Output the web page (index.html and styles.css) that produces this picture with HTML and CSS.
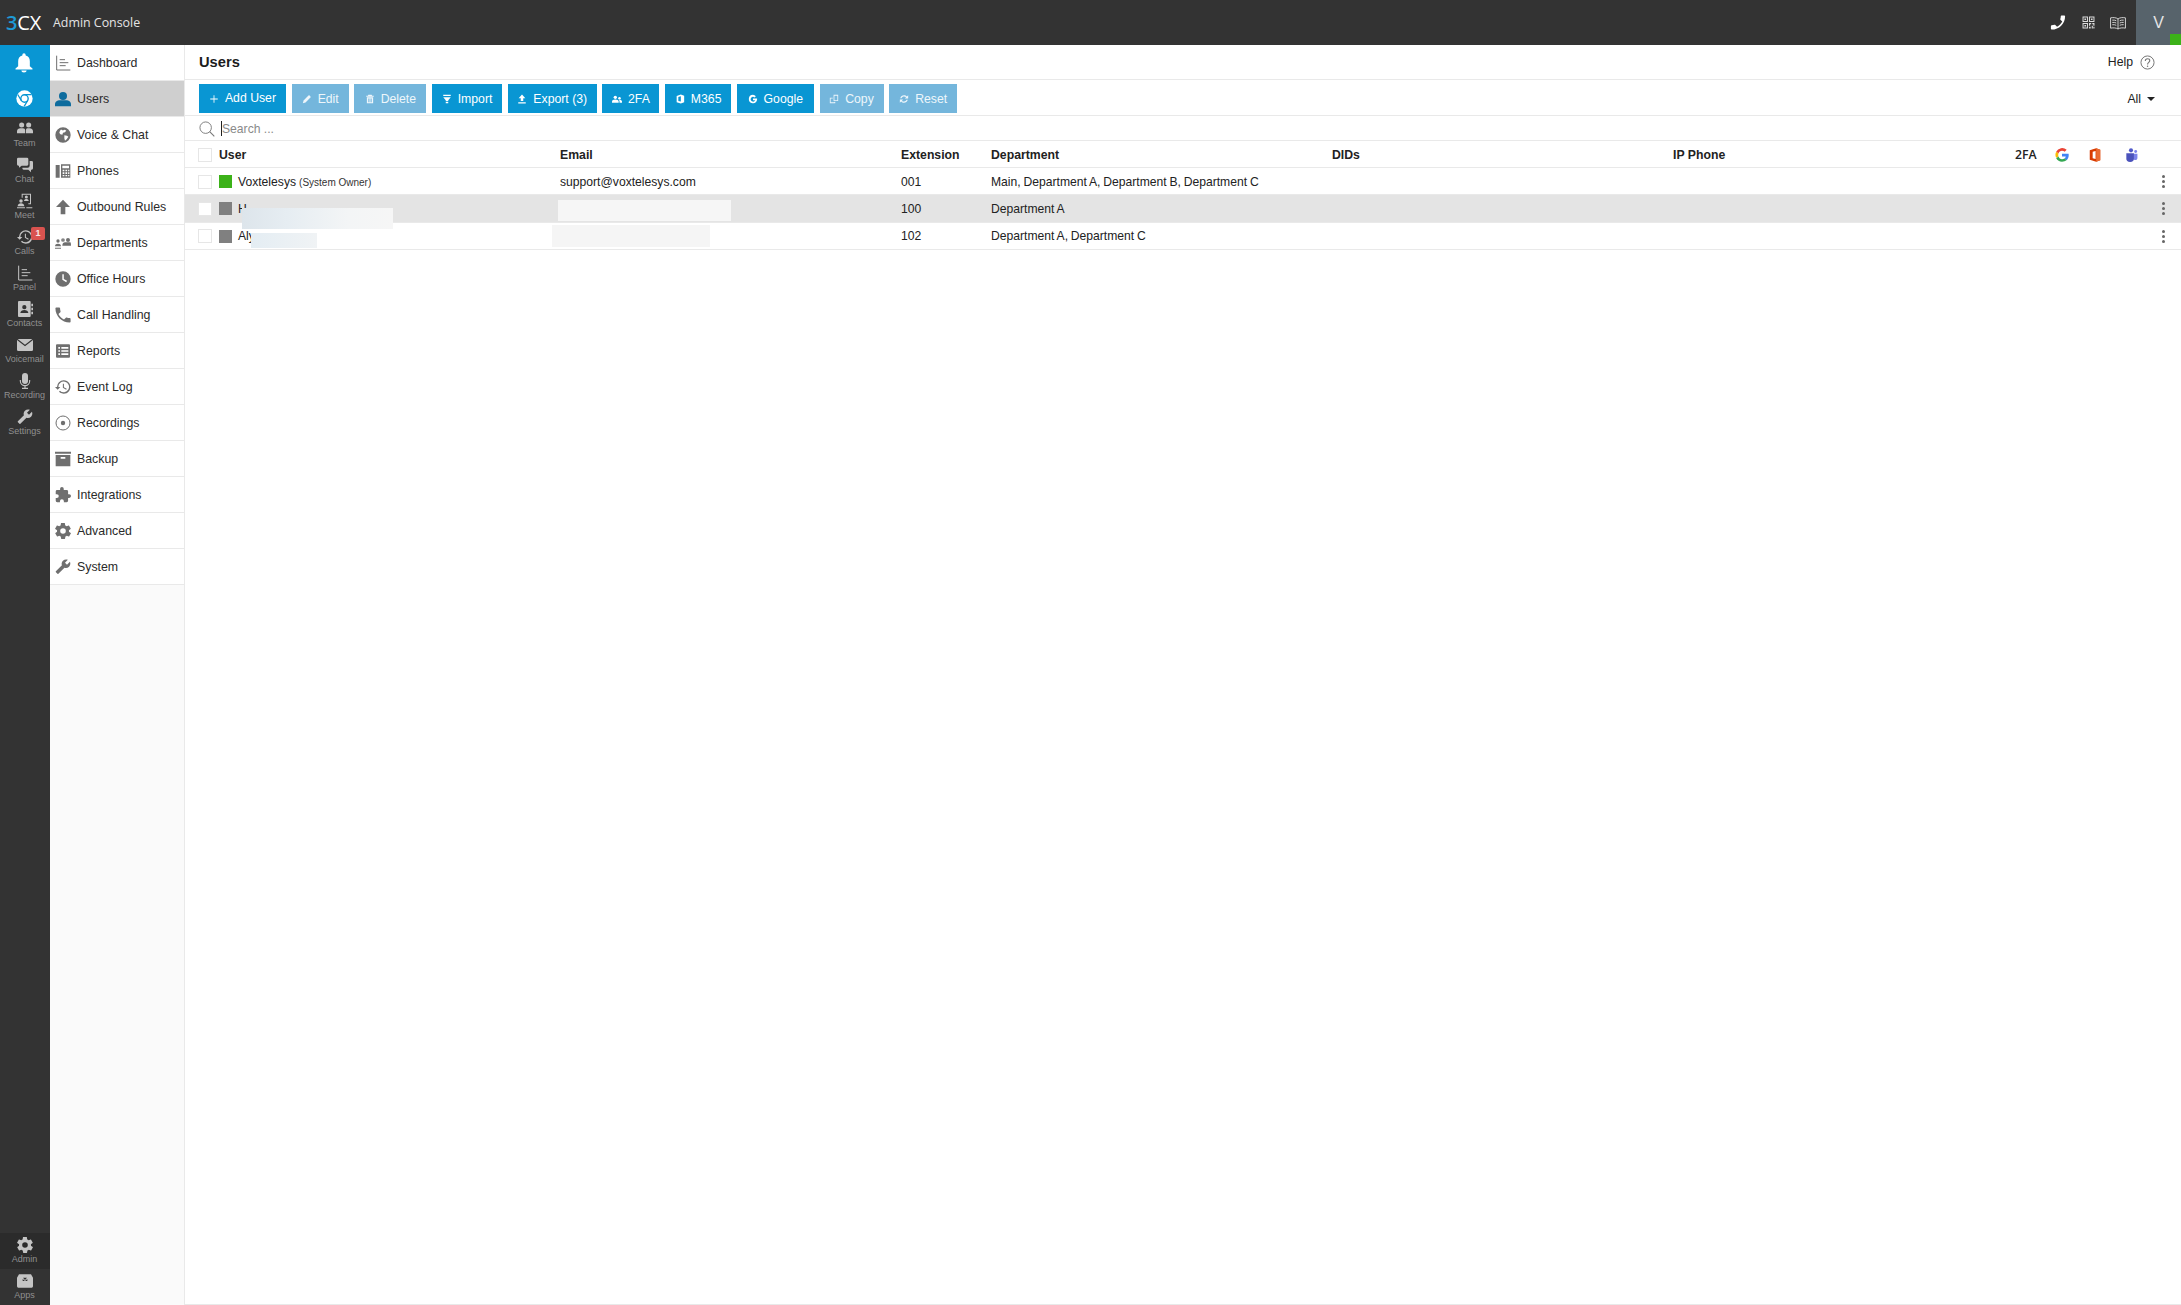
FILE: index.html
```html
<!DOCTYPE html>
<html lang="en">
<head>
<meta charset="utf-8">
<title>3CX Admin Console</title>
<link rel="stylesheet" href="styles.css">
</head>
<body>
<svg class="sprite" xmlns="http://www.w3.org/2000/svg">
  <symbol id="i-bell" viewBox="0 0 24 24"><path d="M12 1a2 2 0 0 1 2 2v.7a7 7 0 0 1 5 6.800v6l3.200 2.800v1.200H1.800v-1.200L5 16.500v-6a7 7 0 0 1 5-6.800V3a2 2 0 0 1 2-2zM8.800 21.500h6.400a3.200 2.500 0 0 1-6.400 0z"/></symbol>
  <symbol id="i-chrome" viewBox="0 0 24 24"><circle cx="12" cy="12" r="11.500"/><circle cx="12" cy="12" r="5.200" fill="#fff" stroke="#0996d3" stroke-width="2"/><path d="M12 6.600h10M7.400 14.800l-5-8.500M16.600 14.800L11.500 23" fill="none" stroke="#0996d3" stroke-width="1.800"/></symbol>
  <symbol id="i-dash" viewBox="0 0 24 24"><path d="M2.500 1v21.500H23" fill="none" stroke="currentColor" stroke-width="1.500"/><path d="M7 7h8M7 11.500h13M7 16h9" fill="none" stroke="currentColor" stroke-width="1.500"/></symbol>
  <symbol id="i-user" viewBox="0 0 24 24"><circle cx="12" cy="7.500" r="6"/><path d="M0 23v-3c0-4 4-6 7-6h10c3 0 7 2 7 6v3z"/></symbol>
  <symbol id="i-globe" viewBox="0 0 24 24"><path fill-rule="evenodd" d="M12 .500a11.500 11.500 0 1 0 0 23 11.500 11.500 0 0 0 0-23zM9 3.800l3 1.400 2-1 3 1.200-2 2.600-3 .5-1 3-3-.5-1.500-2.500 1-3zM14 12.500l4 .5 2 1.500-2.500 4-2.500 2-1-3.500z"/></symbol>
  <symbol id="i-phones" viewBox="0 0 24 24"><path fill-rule="evenodd" d="M1 3h6v19H1zM9 2h14v20H9zM11 4v4h10V4zM11.500 10v2.500h2.500V10zm4.200 0v2.500h2.500V10zm-4.200 4v2.500h2.500V14zm4.200 0v2.500h2.500V14zm4 -4v2.500h1.800V10zm0 4v2.500h1.800V14zm-8.200 4v2h2.500v-2zm4.200 0v2h2.500v-2zm4 0v2h1.800v-2z"/></symbol>
  <symbol id="i-up" viewBox="0 0 24 24"><path d="M12 1l10.500 11h-7v11h-7V12h-7z"/></symbol>
  <symbol id="i-depts" viewBox="0 0 24 24"><circle cx="4.500" cy="9" r="2.500"/><circle cx="12" cy="7.500" r="2.800" opacity=".85"/><circle cx="19.500" cy="7.500" r="3"/><path d="M0 17c0-3 2-4 4.500-4S9 14 9 17zM0 19h9v1.500H0zM11 16c0-3.500 2-5 4-5h8c1 1 1 3 1 5z"/></symbol>
  <symbol id="i-clock" viewBox="0 0 24 24"><path fill-rule="evenodd" d="M12 .500a11.500 11.500 0 1 0 0 23 11.500 11.500 0 0 0 0-23zm-1 4.500h2.200v7l4.800 2.800-1.100 1.900L11 13.200z"/></symbol>
  <symbol id="i-call" viewBox="2.500 2.500 19 19"><path d="M6.600 10.800c1.400 2.800 3.800 5.100 6.600 6.600l2.200-2.200c.3-.3.7-.4 1-.2 1.100.4 2.300.6 3.600.6.600 0 1 .4 1 1V20c0 .6-.4 1-1 1C10.600 21 3 13.400 3 4c0-.6.4-1 1-1h3.500c.6 0 1 .4 1 1 0 1.300.2 2.500.6 3.600.1.300 0 .7-.2 1z"/></symbol>
  <symbol id="i-reports" viewBox="0 0 24 24"><path fill-rule="evenodd" d="M3 2h18a1.500 1.500 0 0 1 1.500 1.500v17A1.500 1.500 0 0 1 21 22H3a1.500 1.500 0 0 1-1.500-1.500v-17A1.500 1.500 0 0 1 3 2zm2 4v2.500h2.500V6zm4.500 0v2.500H20V6zM5 10.800v2.500h2.500v-2.500zm4.500 0v2.500H20v-2.500zM5 15.500V18h2.500v-2.500zm4.500 0V18H20v-2.500z"/></symbol>
  <symbol id="i-history" viewBox="0 0 24 24"><path d="M13 2a10 10 0 0 0-10 10H0l4 4.200L8 12H5a8 8 0 1 1 2.400 5.600L6 19a10 10 0 1 0 7-17zm-1.200 5v6l5 3 .8-1.300-4.200-2.500V7z"/></symbol>
  <symbol id="i-rec" viewBox="0 0 24 24"><circle cx="12" cy="12" r="10.500" fill="none" stroke="currentColor" stroke-width="1.500"/><circle cx="12" cy="12" r="3.300"/></symbol>
  <symbol id="i-box" viewBox="0 0 24 24"><path fill-rule="evenodd" d="M0 1h24v3H0zM1 6h22v17H1zM8.500 9v2.500h7V9z"/></symbol>
  <symbol id="i-puzzle" viewBox="1 1 22 22"><path d="M20.500 11H19V7a2 2 0 0 0-2-2h-4V3.500a2.500 2.500 0 0 0-5 0V5H4a2 2 0 0 0-2 2v3.800h1.500a2.700 2.700 0 0 1 0 5.400H2V20a2 2 0 0 0 2 2h3.800v-1.500a2.700 2.700 0 0 1 5.400 0V22H17a2 2 0 0 0 2-2v-4h1.500a2.500 2.500 0 0 0 0-5z"/></symbol>
  <symbol id="i-gear" viewBox="2 2 20 20"><path d="M19.400 13c.04-.3.1-.7.1-1s0-.7-.1-1l2.100-1.600c.2-.15.25-.4.1-.6l-2-3.500c-.1-.2-.4-.3-.6-.2l-2.500 1c-.5-.4-1.100-.7-1.700-1l-.4-2.600c0-.2-.3-.4-.5-.4h-4c-.2 0-.5.2-.5.4l-.4 2.600c-.6.3-1.200.6-1.700 1l-2.500-1c-.2-.1-.5 0-.6.2l-2 3.500c-.1.2-.1.5.1.600L4.600 11c0 .3-.1.700-.1 1s0 .7.1 1l-2.100 1.600c-.2.150-.25.400-.1.600l2 3.500c.1.200.4.300.6.200l2.500-1c.5.400 1.100.700 1.700 1l.4 2.600c0 .2.300.4.5.4h4c.2 0 .5-.2.5-.4l.4-2.600c.6-.3 1.200-.6 1.700-1l2.500 1c.2.100.5 0 .6-.2l2-3.500c.1-.2.1-.5-.1-.6zM12 15.500a3.500 3.500 0 1 1 0-7 3.500 3.500 0 0 1 0 7z"/></symbol>
  <symbol id="i-wrench" viewBox="0 1 24 23"><g transform="matrix(-1 0 0 1 24 0)"><path d="M22.700 19l-9.100-9.100c.9-2.300.4-5-1.500-6.900-2-2-5-2.400-7.400-1.300L9 6 6 9 1.600 4.700C.4 7.100.9 10.100 2.900 12.100c1.900 1.900 4.600 2.400 6.900 1.500l9.100 9.100c.4.4 1 .4 1.400 0l2.300-2.300c.5-.4.5-1.100.1-1.400z"/></g></symbol>
  <symbol id="i-team" viewBox="0 0 24 18"><circle cx="7" cy="4.500" r="3.800"/><circle cx="17.500" cy="4.500" r="3.800"/><path d="M0 17v-3c0-3 2.500-4.500 5-4.500h4c2 0 3.300 1 3.300 3v4.500zM13.500 17v-5c0-1.500 1-2.500 2.500-2.500h3c2.500 0 5 1.500 5 4.500v3z"/></symbol>
  <symbol id="i-chat" viewBox="0 0 24 24"><path d="M2 1h13a2 2 0 0 1 2 2v8a2 2 0 0 1-2 2H7l-4 3v-3H2a2 2 0 0 1-2-2V3a2 2 0 0 1 2-2z"/><path d="M19 6h3a2 2 0 0 1 2 2v9a2 2 0 0 1-2 2h-1v4l-4-4H10a2 2 0 0 1-2-2v-1h8a3 3 0 0 0 3-3z"/></symbol>
  <symbol id="i-meet" viewBox="0 0 24 24"><path d="M7 1h14v16h-4v-1.500h2.500v-13h-11V7H7z"/><circle cx="14" cy="6" r="2.300"/><path d="M10.500 12c0-2 2-3 3.500-3s3.500 1 3.500 3z"/><circle cx="6" cy="12" r="2.600"/><path d="M1 20c0-3 2.500-4.500 5-4.500s5 1.500 5 4.500zM0 21.500h12V23H0zM14 21.500h9V23h-9z"/></symbol>
  <symbol id="i-contacts" viewBox="0 0 24 24"><path fill-rule="evenodd" d="M3 0h16a1.500 1.500 0 0 1 1.500 1.500v21A1.500 1.500 0 0 1 19 24H3a1.500 1.500 0 0 1-1.500-1.500v-21A1.500 1.500 0 0 1 3 0zm8 6a3.200 3.200 0 1 0 0 6.400A3.200 3.200 0 0 0 11 6zM5 18h12c0-3-3-4.500-6-4.500S5 15 5 18z"/><path d="M21.500 4H24v4h-2.500zM21.500 10H24v4h-2.500zM21.500 16H24v4h-2.500z"/></symbol>
  <symbol id="i-mail" viewBox="0 0 24 18"><path d="M1 0h22L12 8.500zM0 1.500V16a2 2 0 0 0 2 2h20a2 2 0 0 0 2-2V1.500l-12 9.500z"/></symbol>
  <symbol id="i-mic" viewBox="0 0 24 24"><path d="M12 0a4.500 4.500 0 0 1 4.500 4.500V12a4.500 4.500 0 0 1-9 0V4.500A4.500 4.500 0 0 1 12 0z"/><path d="M5 10.500V12a7 7 0 0 0 14 0v-1.500M12 19v3.500M7.500 23h9" fill="none" stroke="currentColor" stroke-width="1.700"/></symbol>
  <symbol id="i-apps" viewBox="0 0 24 20"><path fill-rule="evenodd" d="M3 0h18l3 5v13a2 2 0 0 1-2 2H2a2 2 0 0 1-2-2V5zM9 5l3 3.500L15 5H9zM8.500 7v3h7V7l-3.500 3z"/></symbol>
  <symbol id="i-plus" viewBox="0 0 24 24"><path d="M11 3h2v8h8v2h-8v8h-2v-8H3v-2h8z"/></symbol>
  <symbol id="i-pencil" viewBox="0 0 24 24"><path d="M2 22l1.800-6.500L15.500 3.800a2 2 0 0 1 2.800 0l1.900 1.900a2 2 0 0 1 0 2.800L8.500 20.200z"/></symbol>
  <symbol id="i-trash" viewBox="0 0 24 24"><path fill-rule="evenodd" d="M8 2h8l1 2h4v2.500H3V4h4zM4.500 8h15v14h-15zM8 10.500V20h1.800v-9.500zm3.100 0V20h1.800v-9.500zm3.100 0V20H16v-9.500z"/></symbol>
  <symbol id="i-import" viewBox="0 0 24 24"><path d="M3 2h18v3H3zM3 8h18l-6 7v2.500H9V15zM9 19h6v3H9z"/></symbol>
  <symbol id="i-export" viewBox="0 0 24 24"><path d="M12 1l8 9h-5v7H9v-7H4zM3 19.500h18V23H3z"/></symbol>
  <symbol id="i-two" viewBox="0 0 24 18"><circle cx="8" cy="5" r="4"/><path d="M0 18v-3c0-3 3-5 8-5s8 2 8 5v3z"/><circle cx="18" cy="7" r="3"/><path d="M18 18v-3c0-2-.7-3.300-1.800-4 3.500-.5 7.800.8 7.800 4v3z"/></symbol>
  <symbol id="i-office" viewBox="0 0 24 24"><path fill-rule="evenodd" d="M14 1l8 3v16l-8 3-10-3.500V5zM8 7l6-1.500V18L8 16.500z"/></symbol>
  <symbol id="i-gglyph" viewBox="0 0 24 24"><path d="M12 2a10 10 0 1 0 9.800 12v-3H12v4h5.200a5.600 5.600 0 1 1-1.400-6.800l3-3A10 10 0 0 0 12 2z"/></symbol>
  <symbol id="i-copy" viewBox="0 0 24 24"><path d="M11 2h11v15H11zM13 4v11h7V4zM2 9h7v2H4v9h9v-1.500h2V22H2z"/></symbol>
  <symbol id="i-reset" viewBox="0 0 24 24"><path d="M3 10C4 5.500 8 3 12 3c3 0 5 1 7 3l3-3v8h-8l3-3c-1.500-1.500-3-2-5-2-2.500 0-5 1.500-6 4zM21 14c-1 4.500-5 7-9 7-3 0-5-1-7-3l-3 3v-8h8l-3 3c1.500 1.500 3 2 5 2 2.500 0 5-1.500 6-4z"/></symbol>
  <symbol id="i-search" viewBox="0 0 24 24"><circle cx="10" cy="10" r="8.600" fill="none" stroke="currentColor" stroke-width="1.400"/><path d="M16 16l7 7" fill="none" stroke="currentColor" stroke-width="1.600"/></symbol>
  <symbol id="i-qr" viewBox="0 0 24 24"><path fill-rule="evenodd" d="M1 1h10v10H1zM2.800 2.800v6.400h6.400V2.800zM4.500 4.500h3v3h-3zM13 1h10v10H13zM14.800 2.800v6.400h6.400V2.800zM16.500 4.500h3v3h-3zM1 13h10v10H1zM2.800 14.800v6.400h6.400v-6.400zM4.500 16.500h3v3h-3zM13 13h4v2h-2v3h-2zM19 13h4v5h-2v-3h-2zM13 20h3v3h-3zM18 18h2v5h-2zM21 20h2v3h-2z"/></symbol>
  <symbol id="i-book" viewBox="0 0 28 24"><path d="M14 5C11 2.500 6 2 1 3v18c5-1 10-.5 13 1.500 3-2 8-2.500 13-1.500V3c-5-1-10-.5-13 2zM14 5v17.500M4 7c2.500-.3 5 0 7 1M4 11c2.500-.3 5 0 7 1M4 15c2.500-.3 5 0 7 1M24 7c-2.500-.3-5 0-7 1M24 11c-2.500-.3-5 0-7 1M24 15c-2.500-.3-5 0-7 1" fill="none" stroke="currentColor" stroke-width="1.600"/></symbol>
  <symbol id="i-google" viewBox="0 0 24 24"><path fill="#ea4335" d="M12 4.800c1.900 0 3.400.7 4.600 1.800l3.400-3.400A11.300 11.300 0 0 0 2 6.400l4 3.100c.9-2.800 3.200-4.700 6-4.700z"/><path fill="#4285f4" d="M23.500 12.300c0-.8-.1-1.600-.2-2.300H12v4.500h6.500a5.500 5.500 0 0 1-2.400 3.600l3.800 2.900c2.200-2.100 3.600-5.100 3.600-8.700z"/><path fill="#fbbc05" d="M6 14.500a7.200 7.200 0 0 1 0-5L2 6.400a11.600 11.600 0 0 0 0 10.300z"/><path fill="#34a853" d="M12 23.500c3.100 0 5.800-1 7.900-2.800L16.100 18c-1 .8-2.400 1.200-4.100 1.200-2.800 0-5.200-1.900-6-4.700l-4 3.100a11.500 11.500 0 0 0 10 5.900z"/></symbol>
  <symbol id="i-o365" viewBox="0 0 24 24"><path fill="#d83b01" fill-rule="evenodd" d="M14 .500l7 2.500v18l-7 2.500-11-3.500V4zM8 6.500l5-1.500v14l-5-1.500z"/><path fill="#eb6c32" d="M14 .500l7 2.500v18l-7 2.500z"/></symbol>
  <symbol id="i-teams" viewBox="0 0 24 24"><circle cx="12" cy="4" r="3.500" fill="#5059c9"/><circle cx="20" cy="6" r="2.500" fill="#7b83eb"/><path fill="#7b83eb" d="M16 10h7v7c0 2-1.500 3.500-3.500 3.500S16 19 16 17z"/><path fill="#4b53bc" d="M4 9h13v10c0 2.500-2 5-6.500 5S4 21.500 4 19z"/></symbol>
  <symbol id="i-help" viewBox="0 0 24 24"><circle cx="12" cy="12" r="10.500" fill="none" stroke="currentColor" stroke-width="1.600"/><path d="M8.500 9.500c0-2.200 1.600-3.500 3.600-3.500s3.500 1.300 3.500 3c0 2.800-3.500 2.800-3.500 6" fill="none" stroke="currentColor" stroke-width="1.800"/><circle cx="12.100" cy="18" r="1.200"/></symbol>
</svg>

<div class="app">
  <header class="topbar">
    <span class="logo"><span class="logo-3">3</span>CX</span>
    <span class="console">Admin Console</span>
    <div class="top-actions">
      <svg class="ic top-phone"><use href="#i-call"/></svg>
      <svg class="ic top-qr"><use href="#i-qr"/></svg>
      <svg class="ic top-book"><use href="#i-book"/></svg>
    </div>
    <div class="avatar">V<span class="presence"></span></div>
  </header>

  <div class="body">
    <aside class="rail">
      <div class="rail-blue">
        <div class="rail-top"><svg class="ic bell"><use href="#i-bell"/></svg></div>
        <div class="rail-top"><svg class="ic chrome"><use href="#i-chrome"/></svg></div>
      </div>
      <div class="rail-item"><svg class="ic team"><use href="#i-team"/></svg><span>Team</span></div>
      <div class="rail-item"><svg class="ic"><use href="#i-chat"/></svg><span>Chat</span></div>
      <div class="rail-item"><svg class="ic"><use href="#i-meet"/></svg><span>Meet</span></div>
      <div class="rail-item"><svg class="ic"><use href="#i-history"/></svg><span>Calls</span><b class="badge">1</b></div>
      <div class="rail-item"><svg class="ic"><use href="#i-dash"/></svg><span>Panel</span></div>
      <div class="rail-item"><svg class="ic"><use href="#i-contacts"/></svg><span>Contacts</span></div>
      <div class="rail-item"><svg class="ic"><use href="#i-mail"/></svg><span>Voicemail</span></div>
      <div class="rail-item"><svg class="ic"><use href="#i-mic"/></svg><span>Recording</span></div>
      <div class="rail-item"><svg class="ic"><use href="#i-wrench"/></svg><span>Settings</span></div>
      <div class="rail-spacer"></div>
      <div class="rail-item rail-admin"><svg class="ic"><use href="#i-gear"/></svg><span>Admin</span></div>
      <div class="rail-item"><svg class="ic"><use href="#i-apps"/></svg><span>Apps</span></div>
    </aside>

    <nav class="nav">
      <a class="nav-item"><svg class="ic"><use href="#i-dash"/></svg>Dashboard</a>
      <a class="nav-item active"><svg class="ic"><use href="#i-user"/></svg>Users</a>
      <a class="nav-item"><svg class="ic"><use href="#i-globe"/></svg>Voice &amp; Chat</a>
      <a class="nav-item"><svg class="ic"><use href="#i-phones"/></svg>Phones</a>
      <a class="nav-item"><svg class="ic"><use href="#i-up"/></svg>Outbound Rules</a>
      <a class="nav-item"><svg class="ic"><use href="#i-depts"/></svg>Departments</a>
      <a class="nav-item"><svg class="ic"><use href="#i-clock"/></svg>Office Hours</a>
      <a class="nav-item"><svg class="ic"><use href="#i-call"/></svg>Call Handling</a>
      <a class="nav-item"><svg class="ic"><use href="#i-reports"/></svg>Reports</a>
      <a class="nav-item"><svg class="ic"><use href="#i-history"/></svg>Event Log</a>
      <a class="nav-item"><svg class="ic"><use href="#i-rec"/></svg>Recordings</a>
      <a class="nav-item"><svg class="ic"><use href="#i-box"/></svg>Backup</a>
      <a class="nav-item"><svg class="ic"><use href="#i-puzzle"/></svg>Integrations</a>
      <a class="nav-item"><svg class="ic"><use href="#i-gear"/></svg>Advanced</a>
      <a class="nav-item"><svg class="ic"><use href="#i-wrench"/></svg>System</a>
    </nav>

    <main class="main">
      <div class="title-row">
        <h1>Users</h1>
        <a class="help">Help<svg class="ic"><use href="#i-help"/></svg></a>
      </div>

      <div class="toolbar">
        <button class="btn b-add"><svg class="ic"><use href="#i-plus"/></svg><span class="lift">Add User</span></button>
        <button class="btn off b-edit"><svg class="ic"><use href="#i-pencil"/></svg>Edit</button>
        <button class="btn off b-del"><svg class="ic"><use href="#i-trash"/></svg>Delete</button>
        <button class="btn b-imp"><svg class="ic"><use href="#i-import"/></svg>Import</button>
        <button class="btn b-exp"><svg class="ic"><use href="#i-export"/></svg>Export (3)</button>
        <button class="btn b-2fa"><svg class="ic"><use href="#i-two"/></svg>2FA</button>
        <button class="btn b-365"><svg class="ic"><use href="#i-office"/></svg>M365</button>
        <button class="btn b-goo"><svg class="ic"><use href="#i-gglyph"/></svg>Google</button>
        <button class="btn off b-cop"><svg class="ic"><use href="#i-copy"/></svg>Copy</button>
        <button class="btn off b-res"><svg class="ic"><use href="#i-reset"/></svg>Reset</button>
        <a class="filter">All<i class="caret"></i></a>
      </div>

      <div class="search">
        <svg class="ic"><use href="#i-search"/></svg>
        <span class="cursor"></span><span class="placeholder">Search ...</span>
      </div>

      <div class="row head">
        <span class="cell-check"><span class="check"></span></span>
        <span>User</span><span>Email</span><span>Extension</span><span>Department</span><span>DIDs</span><span>IP Phone</span>
        <span class="h-2fa">2FA</span>
        <span class="cell-logo"><svg class="ic"><use href="#i-google"/></svg></span>
        <span class="cell-logo"><svg class="ic"><use href="#i-o365"/></svg></span>
        <span class="cell-logo"><svg class="ic"><use href="#i-teams"/></svg></span>
        <span></span>
      </div>

      <div class="row first">
        <span class="cell-check"><span class="check"></span></span>
        <span class="name"><i class="status on"></i>Voxtelesys <small>(System Owner)</small></span>
        <span>support@voxtelesys.com</span><span>001</span>
        <span class="dept">Main, Department A, Department B, Department C</span>
        <span></span><span></span><span></span><span></span><span></span><span></span>
        <span class="dots"><i></i><i></i><i></i></span>
      </div>

      <div class="row hover">
        <span class="cell-check"><span class="check"></span></span>
        <span class="name"><i class="status"></i>H<i class="mask mask-n1"></i></span>
        <span class="email"><i class="mask mask-e1"></i></span><span>100</span>
        <span class="dept">Department A</span>
        <span></span><span></span><span></span><span></span><span></span><span></span>
        <span class="dots"><i></i><i></i><i></i></span>
      </div>

      <div class="row">
        <span class="cell-check"><span class="check"></span></span>
        <span class="name"><i class="status"></i>Aly<i class="mask mask-n2"></i></span>
        <span class="email"><i class="mask mask-e2"></i></span><span>102</span>
        <span class="dept">Department A, Department C</span>
        <span></span><span></span><span></span><span></span><span></span><span></span>
        <span class="dots"><i></i><i></i><i></i></span>
      </div>
    </main>
  </div>
</div>
</body>
</html>
```

FILE: styles.css
```css
* { box-sizing: border-box; }
html, body { margin: 0; height: 100%; overflow: hidden; }
body { font-family: "Liberation Sans", Arial, sans-serif; font-size: 12.15px; color: #222; background: #fff; }
.sprite { position: absolute; width: 0; height: 0; }
.ic { display: block; fill: currentColor; flex: none; }

.app { display: flex; flex-direction: column; height: 100%; }

.topbar { display: flex; align-items: center; height: 45px; background: #333; color: #e8e8e8; flex: none; }
.logo { width: 53px; padding-left: 6px; font-size: 20px; letter-spacing: -.2px; color: #fff; font-family: "Open Sans", sans-serif; font-weight: 400; }
.logo-3 { color: #1e9ad6; font-weight: 600; }
.console { font-family: "Open Sans", sans-serif; font-size: 12.4px; color: #e4e4e4; }
.top-actions { margin-left: auto; display: flex; align-items: center; color: #fff; }
.top-phone { width: 16px; height: 15px; margin-right: 16px; transform: scaleX(-1); }
.top-qr { width: 13px; height: 13px; margin-right: 15px; color: #ddd; }
.top-book { width: 16px; height: 14px; margin-right: 10px; color: #ddd; }
.avatar { position: relative; width: 45px; height: 45px; background: #57636b; color: #e6e6e6; font-size: 16px; display: flex; align-items: center; justify-content: center; }
.presence { position: absolute; right: 0; bottom: 0; width: 11px; height: 11px; background: #3cb219; }

.body { display: flex; flex: 1; min-height: 0; }

.rail { width: 50px; flex: none; background: #333; display: flex; flex-direction: column; color: #c4c4c4; }
.rail-blue { background: #0996d3; }
.rail-top { height: 36px; padding: 0 2px 1px 0; display: flex; align-items: center; justify-content: center; color: #fff; }
.bell { width: 20px; height: 21px; }
.chrome { width: 17px; height: 17px; }
.rail-item { position: relative; height: 36px; display: flex; flex-direction: column; align-items: center; padding: 4px 1px 0 0; }
.rail-item .ic { width: 16px; height: 16px; }
.rail-item .team { height: 12px; margin: 1px 0 3px; }
.rail-item span { font-size: 9px; line-height: 11px; color: #909090; margin-top: 1px; white-space: nowrap; }
.rail-spacer { flex: 1; }
.rail-admin { background: #2b2b2b; }
.badge { position: absolute; left: 31px; top: 2px; width: 14px; height: 13px; border-radius: 2px; background: #d9534f; color: #f8e6e6; font-size: 9px; font-weight: bold; text-align: center; line-height: 13px; }

.nav { width: 135px; flex: none; background: #fafafa; border-right: 1px solid #e9e9e9; }
.nav-item { display: flex; align-items: center; height: 36px; background: #fff; border-bottom: 1px solid #e9e9e9; padding-left: 5px; gap: 6px; color: #2a2a2a; font-size: 12.35px; }
.nav-item .ic { width: 16px; height: 16px; color: #6f6f6f; }
.nav-item.active { background: #cfcfcf; }
.nav-item.active .ic { color: #0e6c9e; }

.main { flex: 1; min-width: 0; border-bottom: 1px solid #e9e9e9; }
.title-row { display: flex; align-items: center; justify-content: space-between; height: 35px; padding: 0 26px 0 14px; border-bottom: 1px solid #e9e9e9; }
h1 { margin: 0; font-size: 14.7px; font-weight: bold; color: #1c1c1c; }
.help { display: flex; align-items: center; gap: 7px; font-size: 12.25px; }
.help .ic { width: 15px; height: 15px; color: #777; }

.toolbar { display: flex; align-items: center; height: 36px; padding: 2px 26px 0 14px; gap: 5.700px; border-bottom: 1px solid #e9e9e9; font-size: 12.25px; }
.btn { display: flex; align-items: center; justify-content: center; height: 29px; border: 0; padding: 0; background: #0996d3; color: #fff; font: inherit; }
.btn .ic { width: 10px; height: 10px; margin-right: 6px; }
.btn.off { background: #74b6dc; color: #eef6fb; }
.lift { margin-top: -2px; }
.b-add { width: 87px; } .b-edit { width: 57px; } .b-del { width: 72px; } .b-imp { width: 70px; } .b-exp { width: 89px; }
.b-2fa { width: 57px; } .b-365 { width: 66px; } .b-goo { width: 77px; } .b-cop { width: 64px; } .b-res { width: 68px; }
.filter { margin-left: auto; display: flex; align-items: center; gap: 6px; }
.caret { width: 0; height: 0; border-left: 4px solid transparent; border-right: 4px solid transparent; border-top: 4px solid #222; }

.search { display: flex; align-items: center; height: 25px; padding: 1px 0 0 14px; border-bottom: 1px solid #e9e9e9; }
.search .ic { width: 16px; height: 16px; color: #777; margin-right: 6px; }
.cursor { width: 1px; height: 15px; background: #222; }
.placeholder { color: #8a8a8a; }

.row { display: grid; grid-template-columns: 34px 341px 341px 90px 341px 341px 342px 40px 33px 36px 30px 1fr; align-items: center; height: 27px; border-bottom: 1px solid #e9e9e9; }
.head { padding-top: 1px; font-weight: bold; color: #222; font-size: 12.25px; }
.first { padding-top: 1px; }
.h-2fa { font-family: "Open Sans", sans-serif; font-weight: 600; }
.hover { background: #e4e4e4; height: 28px; }
.cell-check { display: flex; justify-content: flex-end; padding-right: 7px; }
.check { width: 14px; height: 14px; background: #fff; border: 1px solid #e6e6e6; }
.cell-logo .ic { width: 14px; height: 14px; }
.name { position: relative; display: flex; align-items: center; }
.name small { font-size: 10px; margin-left: 3px; color: #333; padding-top: 1px; }
.status { width: 13px; height: 13px; margin-right: 6px; background: #808080; }
.status.on { background: #3cb219; }
.email { position: relative; height: 100%; }
.dept { word-spacing: -.6px; white-space: nowrap; }
.mask { position: absolute; display: block; }
.mask-n1 { left: 23px; top: 6px; width: 151px; height: 21px; background: linear-gradient(90deg, #dde5eb, #e6edf2 30%, #f3f5f6 70%, #f6f6f6); }
.mask-n2 { left: 32px; top: 4px; width: 66px; height: 15px; background: linear-gradient(90deg, #e4edf3, #f0f3f5); }
.mask-e1 { left: -2px; top: 5px; width: 173px; height: 21px; background: #f6f6f6; }
.mask-e2 { left: -8px; top: 2px; width: 158px; height: 22px; background: #f5f5f5; }
.dots { display: flex; flex-direction: column; align-items: center; justify-content: center; gap: 2px; padding-right: 9px; }
.dots i { width: 3px; height: 3px; border-radius: 50%; background: #666; }
```
